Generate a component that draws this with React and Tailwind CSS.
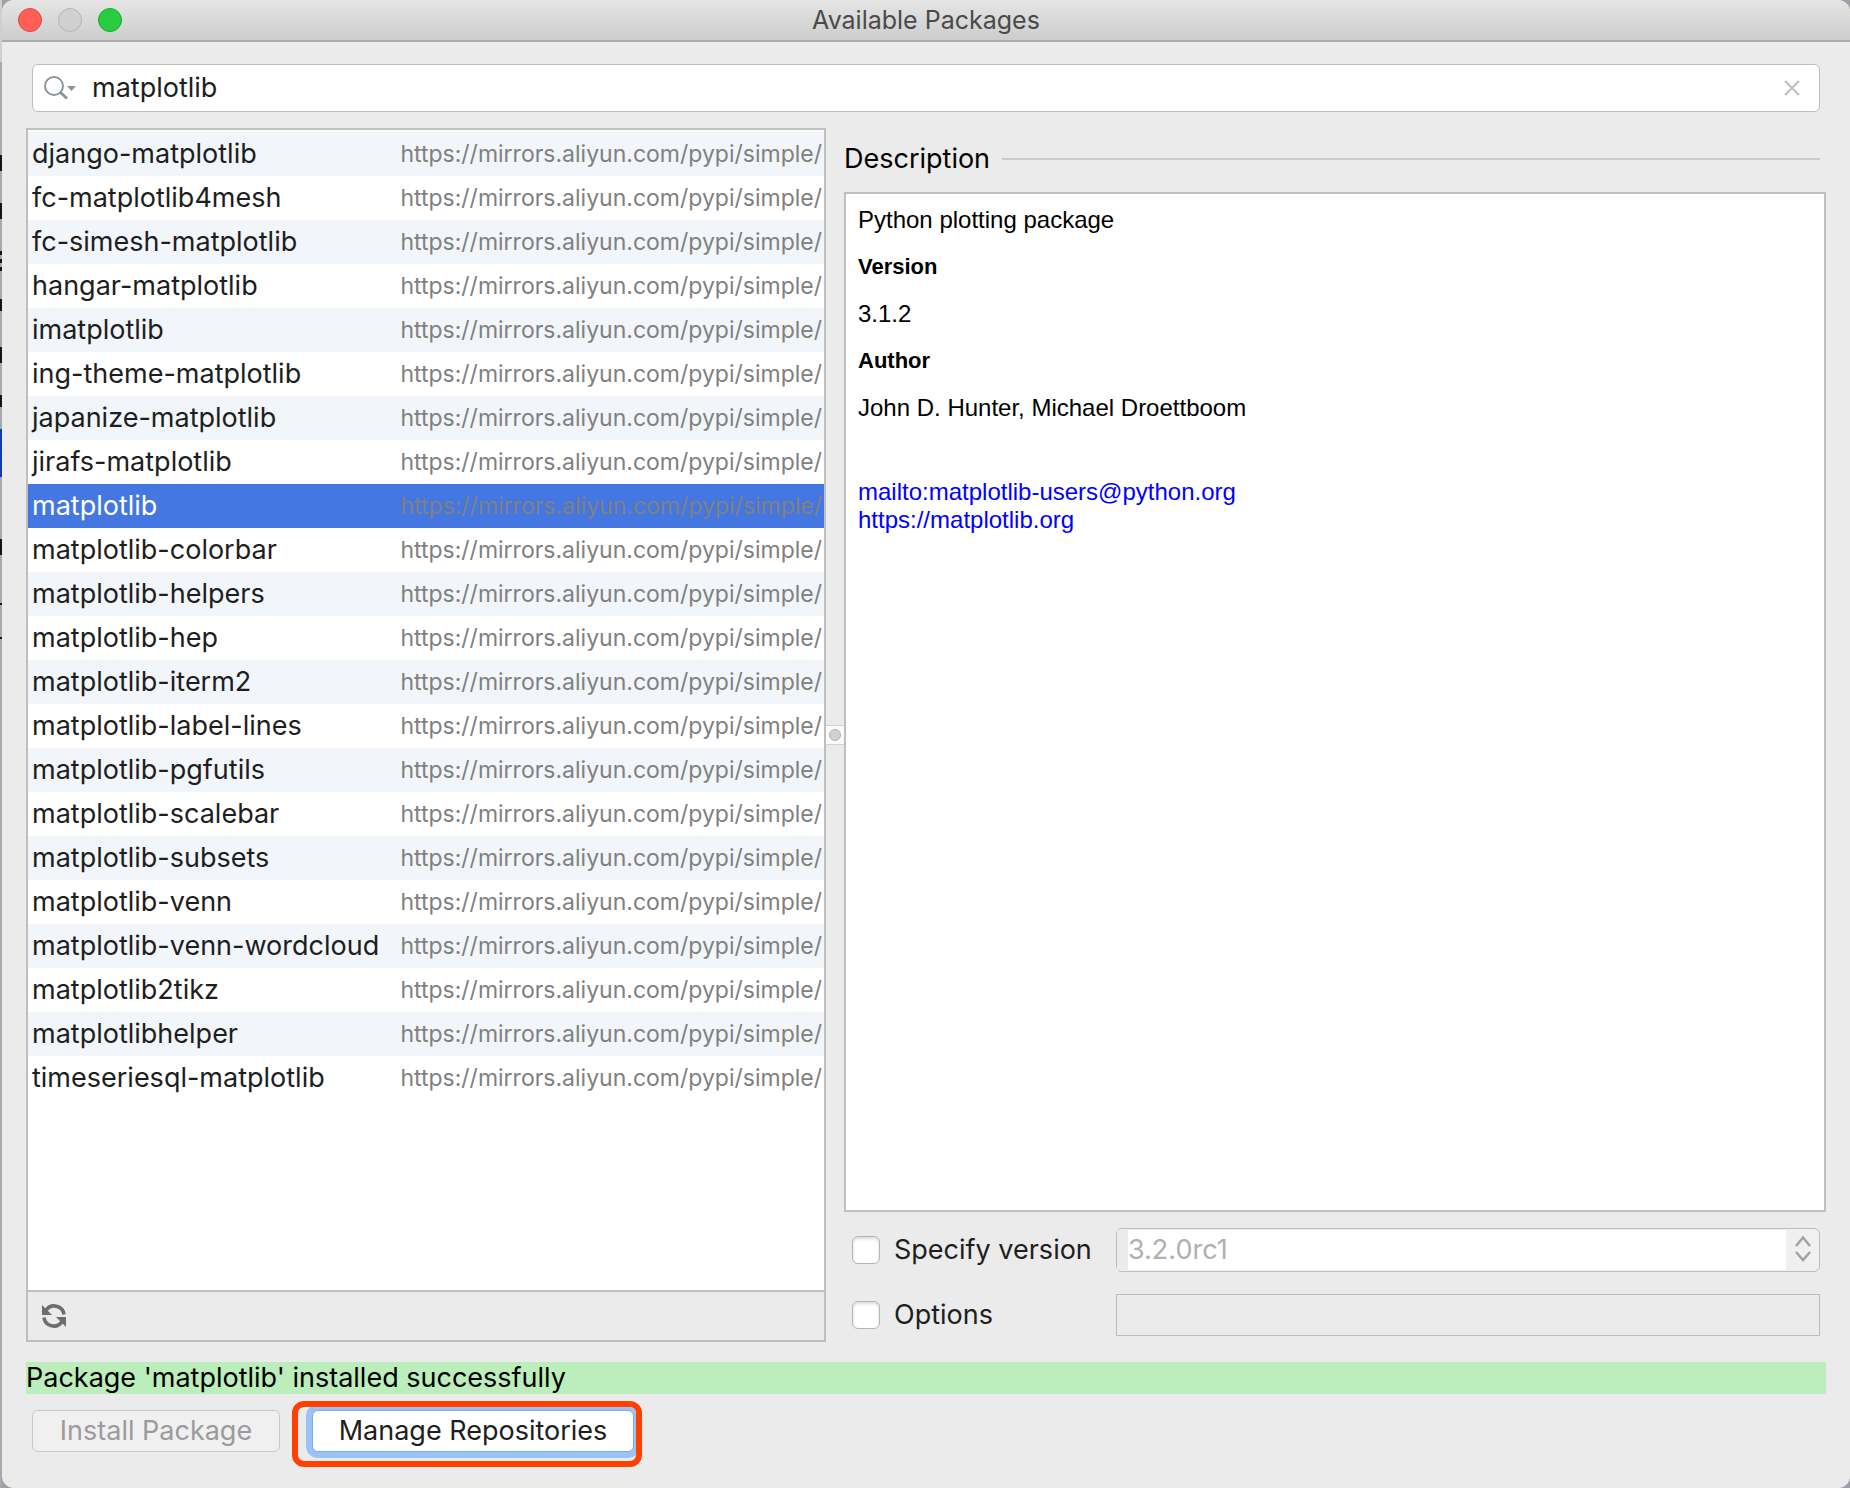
import React, { useState } from "react";

const REPO = "https://mirrors.aliyun.com/pypi/simple/";
const PACKAGES = [
  "django-matplotlib",
  "fc-matplotlib4mesh",
  "fc-simesh-matplotlib",
  "hangar-matplotlib",
  "imatplotlib",
  "ing-theme-matplotlib",
  "japanize-matplotlib",
  "jirafs-matplotlib",
  "matplotlib",
  "matplotlib-colorbar",
  "matplotlib-helpers",
  "matplotlib-hep",
  "matplotlib-iterm2",
  "matplotlib-label-lines",
  "matplotlib-pgfutils",
  "matplotlib-scalebar",
  "matplotlib-subsets",
  "matplotlib-venn",
  "matplotlib-venn-wordcloud",
  "matplotlib2tikz",
  "matplotlibhelper",
  "timeseriesql-matplotlib",
];

// Sliver of the window behind the dialog, visible along its left edge.
function BackdropEdge() {
  return (
    <div className="flex w-0.5 shrink-0 flex-col bg-[#a4a9ae]" aria-hidden="true">
      <div className="h-[62px] bg-[#cfcfcf]" />
      <div className="mt-[93px] h-4 bg-[#141414]" />
      <div className="mt-8 h-4 bg-[#141414]" />
      <div className="mt-8 h-1 bg-[#141414]" />
      <div className="mt-1 h-1 bg-[#141414]" />
      <div className="mt-1 h-1 bg-[#141414]" />
      <div className="mt-7 h-3 bg-[#141414]" />
      <div className="mt-9 h-4 bg-[#141414]" />
      <div className="mt-8 h-3 bg-[#141414]" />
      <div className="mt-[22px] h-12 bg-[#0a3cb4]" />
      <div className="mt-[62px] h-4 bg-[#141414]" />
      <div className="mt-12 h-0.5 bg-[#141414]" />
      <div className="mt-8 h-0.5 bg-[#141414]" />
    </div>
  );
}

function TitleBar() {
  return (
    <header className="grid h-[42px] grid-cols-[1fr_auto_1fr] items-center border-b-2 border-[#ababab] bg-gradient-to-b from-[#e5e5e5] to-[#cdcdcd] px-4">
      <div className="flex gap-4">
        <button aria-label="Close" className="size-6 rounded-full border border-[#e2463f] bg-[#ff5f57]" />
        <button aria-label="Minimize" className="size-6 rounded-full border border-[#b5b5b5] bg-[#d0d0d0]" />
        <button aria-label="Zoom" className="size-6 rounded-full border border-[#14ae2c] bg-[#28cd41]" />
      </div>
      <h1 className="text-[25px] leading-8 text-[#4a4a4a]">Available Packages</h1>
    </header>
  );
}

function SearchBar() {
  const [query, setQuery] = useState("matplotlib");
  return (
    <div className="mx-1.5 flex h-12 items-center rounded-md border border-[#bdbdbd] bg-white pr-[15px] pl-[11px]">
      <svg className="h-6 w-8 shrink-0" viewBox="0 0 32 24" fill="none" aria-hidden="true">
        <circle cx="10" cy="10" r="9" stroke="#8a959c" strokeWidth="2" />
        <path d="M16.5 16.5 23 22.5" stroke="#8a959c" strokeWidth="3" />
        <path d="M23 10h9l-4.5 5z" fill="#8a959c" />
      </svg>
      <input
        aria-label="Search packages"
        className="ml-4 min-w-0 flex-1 bg-transparent text-[27px] leading-8 text-[#1e1e1e] outline-none"
        value={query}
        onChange={(e) => setQuery(e.target.value)}
      />
      <button aria-label="Clear search" className="flex size-6 items-center justify-center" onClick={() => setQuery("")}>
        <svg className="size-4" viewBox="0 0 16 16" aria-hidden="true">
          <path d="m1 1 14 14M15 1 1 15" stroke="#b9bfc4" strokeWidth="2" />
        </svg>
      </button>
    </div>
  );
}

function PackageList() {
  const [selected, setSelected] = useState("matplotlib");
  return (
    <section className="flex w-[800px] shrink-0 flex-col border-2 border-[#bfbfbf]">
      <ul className="flex-1 bg-white pt-0.5">
        {PACKAGES.map((name) => {
          const active = name === selected;
          return (
            <li key={name} className={active ? "bg-[#4477e2] text-white" : "text-[#1e1e1e] odd:bg-[#f2f5fa]"}>
              <button className="flex h-11 w-full items-center justify-between pr-0.5 pl-1 whitespace-nowrap" onClick={() => setSelected(name)}>
                <span className="text-[27px] leading-8">{name}</span>
                <span className="text-[23px] leading-8 text-[#808080]">{REPO}</span>
              </button>
            </li>
          );
        })}
      </ul>
      <div className="flex h-[50px] items-center border-t-2 border-[#bfbfbf] px-3.5">
        <button aria-label="Reload list of packages">
          <svg className="size-6" viewBox="0 0 24 24" fill="none" aria-hidden="true">
            <path d="M4 6.500A9.800 9.800 0 0 1 22 10.500" stroke="#6e6e6e" strokeWidth="3.6" />
            <path d="M20 17.500A9.800 9.800 0 0 1 2 13.500" stroke="#6e6e6e" strokeWidth="3.6" />
            <path d="M0 1v10h10z" fill="#6e6e6e" />
            <path d="M24 23V13H14z" fill="#6e6e6e" />
          </svg>
        </button>
      </div>
    </section>
  );
}

function Splitter() {
  return (
    <div className="flex w-[18px] shrink-0 flex-col justify-center">
      <div className="flex h-5 items-center justify-center border-y border-[#d2d2d2] bg-[#fafafa]">
        <div className="size-3 rounded-full border border-[#b4b4b4] bg-[#d0d0d0]" />
      </div>
    </div>
  );
}

function CheckRow({ id, label, children }) {
  return (
    <div className="flex items-center">
      <label htmlFor={id} className="flex w-[272px] shrink-0 items-center gap-3.5 pl-2 text-[27px] leading-8 whitespace-nowrap text-[#1e1e1e]">
        <input
          id={id}
          type="checkbox"
          className="size-7 shrink-0 appearance-none rounded-md border border-[#b4b4b4] bg-white shadow-[inset_0_2px_3px_#dcdcdc] checked:bg-[#4477e2]"
        />
        {label}
      </label>
      {children}
    </div>
  );
}

function Details() {
  return (
    <section className="flex min-w-0 flex-1 flex-col">
      <div className="mt-[15px] mr-1.5 mb-[17px] flex items-center gap-3">
        <h2 className="text-[27px] leading-8 text-black">Description</h2>
        <div className="h-0.5 flex-1 bg-[#cbcbcb]" />
      </div>
      <div className="flex-1 border-2 border-[#bfbfbf] bg-white px-3 pt-3 font-['Liberation_Sans',Arial,sans-serif] text-[24px] leading-7 text-black">
        <p>Python plotting package</p>
        <h3 className="mt-[19px] text-[22px] font-bold">Version</h3>
        <p className="mt-[19px]">3.1.2</p>
        <h3 className="mt-[19px] text-[22px] font-bold">Author</h3>
        <p className="mt-[19px]">John D. Hunter, Michael Droettboom</p>
        <div className="mt-14 flex flex-col items-start text-[#0000ff]">
          <a href="mailto:matplotlib-users@python.org">mailto:matplotlib-users@python.org</a>
          <a href="https://matplotlib.org">https://matplotlib.org</a>
        </div>
      </div>
      <div className="mt-4 mr-1.5 mb-1.5 flex flex-col gap-[22px]">
        <CheckRow id="specify-version" label="Specify version">
          <div className="grid h-11 min-w-0 flex-1 rounded-md border border-[#bdbdbd] bg-[#f0f0f0]">
            <select
              aria-label="Version"
              disabled
              className="col-start-1 row-start-1 mr-[33px] h-[40px] appearance-none self-center border-l-[11px] border-[#ebebeb] bg-white text-[27px] leading-8 text-[#b0b0b0] opacity-100"
            >
              <option>3.2.0rc1</option>
            </select>
            <svg className="col-start-1 row-start-1 mt-1.5 mr-2 h-7 w-4 justify-self-end" viewBox="0 0 16 28" fill="none" aria-hidden="true">
              <path d="m1 11 7-8.500 7 8.500M1 17l7 8 7-8" stroke="#a3a3a3" strokeWidth="2.500" />
            </svg>
          </div>
        </CheckRow>
        <CheckRow id="options" label="Options">
          <input aria-label="Options value" disabled className="h-[42px] min-w-0 flex-1 border border-[#bdbdbd] bg-[#ebebeb]" />
        </CheckRow>
      </div>
    </section>
  );
}

function Footer() {
  return (
    <footer className="mt-5">
      <p className="h-8 bg-[#bbeebb] text-[27px] leading-8 text-black">Package 'matplotlib' installed successfully</p>
      <div className="flex items-start gap-3 pt-[7px] pb-[21px] pl-1.5">
        <button disabled className="mt-[9px] h-[42px] w-[248px] rounded-md border border-[#c8c8c8] bg-[#f0f0f0] text-[27px] leading-8 text-[#9b9b9b]">
          Install Package
        </button>
        <div className="overflow-hidden rounded-xl border-6 border-[#ff4000] pt-[3px] pr-0.5 pb-[9px] pl-3.5">
          <button className="block h-[42px] w-[322px] rounded-md border border-[#82aae6] bg-white text-[27px] leading-8 text-[#1e1e1e] ring-6 ring-[#9ac3f5]">
            Manage Repositories
          </button>
        </div>
      </div>
    </footer>
  );
}

export default function App() {
  return (
    <div className="flex min-h-screen bg-[#9da0a4] font-[Inter,'Noto_Sans',sans-serif]">
      <BackdropEdge />
      <main className="flex min-w-0 flex-1 flex-col overflow-hidden rounded-xl bg-[#ebebeb]">
        <TitleBar />
        <div className="flex flex-1 flex-col px-6 pt-[22px]">
          <SearchBar />
          <div className="mt-4 flex flex-1">
            <PackageList />
            <Splitter />
            <Details />
          </div>
          <Footer />
        </div>
      </main>
    </div>
  );
}
